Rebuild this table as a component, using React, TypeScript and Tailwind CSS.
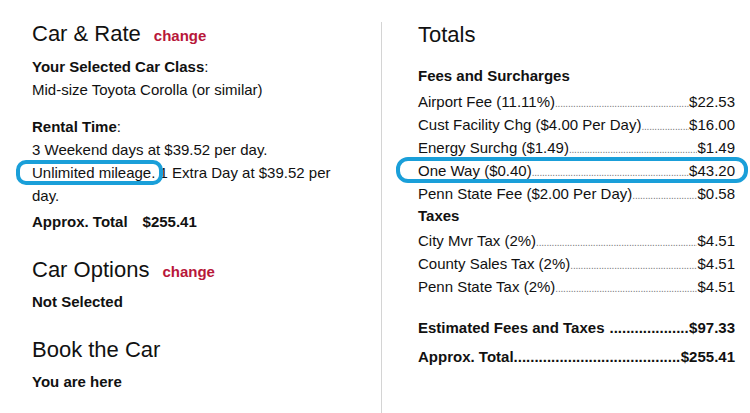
import React from "react";

type Fee = { label: string; amount: string; circled?: boolean };

const FEES: Fee[] = [
  { label: "Airport Fee (11.11%)", amount: "$22.53" },
  { label: "Cust Facility Chg ($4.00 Per Day)", amount: "$16.00" },
  { label: "Energy Surchg ($1.49)", amount: "$1.49" },
  { label: "One Way ($0.40)", amount: "$43.20", circled: true },
  { label: "Penn State Fee ($2.00 Per Day)", amount: "$0.58" },
];

const TAXES: Fee[] = [
  { label: "City Mvr Tax (2%)", amount: "$4.51" },
  { label: "County Sales Tax (2%)", amount: "$4.51" },
  { label: "Penn State Tax (2%)", amount: "$4.51" },
];

const DOTS = ".".repeat(200);

function Row({ label, amount, circled }: Fee) {
  return (
    <div className="relative flex items-baseline h-[23px] leading-[23px]">
      {circled && (
        <span className="absolute -left-[22px] -right-[13px] -top-[2px] -bottom-[1px] border-4 border-[#1a9fd9] rounded-[12px] pointer-events-none" />
      )}
      <span className="shrink-0 whitespace-nowrap">{label}</span>
      <span className="flex-1 w-0 overflow-hidden whitespace-nowrap text-[10px] text-[#777] leading-none tracking-[-0.2px]">
        {DOTS}
      </span>
      <span className="shrink-0 whitespace-nowrap">{amount}</span>
    </div>
  );
}

function BoldRow({ label, amount, gap }: { label: string; amount: string; gap?: boolean }) {
  return (
    <div className="flex items-baseline h-[23px] leading-[23px] font-bold">
      <span className="shrink-0 whitespace-nowrap">{label}</span>
      <span className={`flex-1 w-0 overflow-hidden whitespace-nowrap ${gap ? "pl-[5px]" : ""}`}>{DOTS}</span>
      <span className="shrink-0 whitespace-nowrap">{amount}</span>
    </div>
  );
}

function Heading({ title, change }: { title: string; change?: boolean }) {
  return (
    <h2 className="flex items-baseline h-[26px] leading-[26px] text-[22px] font-normal whitespace-nowrap">
      {title}
      {change && <span className="ml-[13px] text-[15px] font-bold text-[#b8173a]">change</span>}
    </h2>
  );
}

export default function App() {
  return (
    <div
      className="flex w-[750px] min-h-[413px] overflow-hidden bg-white text-[#111] text-[15px] leading-[23px]"
      style={{ fontFamily: '"Liberation Sans", Arial, sans-serif' }}
    >
      <div className="w-[381px] shrink-0 pl-8 pr-[30px] pt-[21px]">
        <Heading title="Car & Rate" change />
        <p className="mt-[8px]">
          <b>Your Selected Car Class</b>:
        </p>
        <p>Mid-size Toyota Corolla (or similar)</p>
        <p className="mt-[14px]">
          <b>Rental Time</b>:
        </p>
        <p>3 Weekend days at $39.52 per day.</p>
        <p>
          <span className="relative">
            <span className="absolute -left-4 -right-2 -top-[4px] -bottom-[4px] border-4 border-[#1a9fd9] rounded-[10px]" />
            Unlimited mileage.
          </span>{" "}
          1 Extra Day at $39.52 per day.
        </p>
        <p className="mt-[3px] font-bold">
          Approx. Total<span className="ml-[15px]">$255.41</span>
        </p>
        <div className="mt-[24px]">
          <Heading title="Car Options" change />
        </div>
        <p className="mt-[7px] font-bold">Not Selected</p>
        <div className="mt-[24px]">
          <Heading title="Book the Car" />
        </div>
        <p className="mt-[7px] font-bold">You are here</p>
      </div>

      <div className="flex-1 min-w-0 mt-[22px] border-l border-[#d4d4d4] pl-[36px] pr-[15px]">
        <Heading title="Totals" />
        <p className="mt-[16px] font-bold">Fees and Surcharges</p>
        <div className="mt-[3px]">
          {FEES.map((f) => (
            <Row key={f.label} {...f} />
          ))}
        </div>
        <p className="font-bold h-[22px] leading-[22px]">Taxes</p>
        <div className="mt-[2px]">
          {TAXES.map((f) => (
            <Row key={f.label} {...f} />
          ))}
        </div>
        <div className="mt-[18px]">
          <BoldRow label="Estimated Fees and Taxes" amount="$97.33" gap />
        </div>
        <div className="mt-[6px]">
          <BoldRow label="Approx. Total" amount="$255.41" />
        </div>
      </div>
    </div>
  );
}
